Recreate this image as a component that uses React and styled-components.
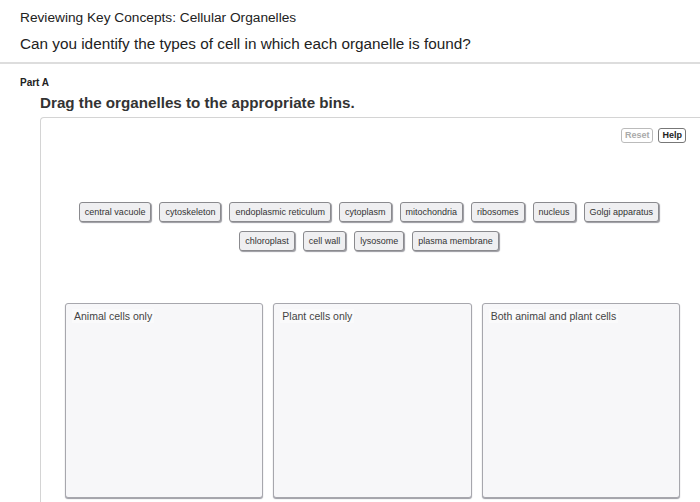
import React from "react";
import styled, { createGlobalStyle } from "styled-components";

const GlobalStyle = createGlobalStyle`
  body {
    margin: 0;
    background: #fff;
    font-family: "Liberation Sans", Arial, sans-serif;
    color: #222;
  }
`;

const Page = styled.div`
  width: 700px;
  height: 502px;
  overflow: hidden;
`;

const Header = styled.div`
  padding: 10px 20px 0;
`;

const Title = styled.div`
  font-size: 13.7px;
  line-height: 16px;
  color: #222;
`;

const Question = styled.div`
  margin-top: 9px;
  font-size: 15.3px;
  line-height: 18px;
  color: #222;
`;

const Divider = styled.hr`
  margin: 9px 0 0;
  border: none;
  border-top: 2px solid #ddd;
`;

const PartLabel = styled.div`
  padding: 13px 20px 0;
  font-size: 10px;
  font-weight: bold;
  line-height: 12px;
`;

const Instruction = styled.div`
  padding: 5px 40px 0;
  font-size: 15.2px;
  font-weight: bold;
  line-height: 18px;
  color: #333;
`;

const Panel = styled.div`
  margin: 5px 0 0 40px;
  height: 400px;
  border: 1px solid #d4d4d4;
  border-right: none;
  border-bottom: none;
  border-top-left-radius: 4px;
  display: flex;
  flex-direction: column;
`;

const Toolbar = styled.div`
  display: flex;
  justify-content: flex-end;
  gap: 5px;
  padding: 10px 14px 0 0;
`;

const ToolButton = styled.button`
  font-family: inherit;
  font-size: 9px;
  font-weight: bold;
  line-height: 13px;
  padding: 0 3px;
  background: #fff;
  border: 1px solid ${p => (p.$disabled ? "#bbb" : "#777")};
  color: ${p => (p.$disabled ? "#aaa" : "#222")};
  border-radius: 3px;
  cursor: pointer;
`;

const ChipArea = styled.div`
  display: flex;
  flex-direction: column;
  align-items: center;
  gap: 9px;
  margin-top: 59px;
  padding-right: 3px;
`;

const ChipRow = styled.div`
  display: flex;
  gap: 8px;
`;

const Chip = styled.div`
  height: 18px;
  line-height: 18px;
  padding: 0 5px;
  font-size: 9px;
  color: #333;
  background: #efeff1;
  border: 1px solid #8a8a8e;
  border-radius: 3px;
  box-shadow: 1px 1px 1px #9a9aa0;
  white-space: nowrap;
  cursor: grab;
`;

const Bins = styled.div`
  display: flex;
  gap: 10px;
  margin-top: 52px;
  padding: 0 20px 0 24px;
`;

const Bin = styled.div`
  flex: 1;
  height: 193px;
  background: #f7f7f9;
  border: 1px solid #a7a7ad;
  border-radius: 3px;
  box-shadow: 0 1px 1px #9c9ca4;
`;

const BinLabel = styled.div`
  display: inline-block;
  margin: 5px 0 0 6px;
  padding: 1px 2px;
  font-size: 10.5px;
  color: #444;
  background: #fafafb;
`;

const rows = [
  [
    "central vacuole",
    "cytoskeleton",
    "endoplasmic reticulum",
    "cytoplasm",
    "mitochondria",
    "ribosomes",
    "nucleus",
    "Golgi apparatus",
  ],
  ["chloroplast", "cell wall", "lysosome", "plasma membrane"],
];

const bins = ["Animal cells only", "Plant cells only", "Both animal and plant cells"];

export default function App() {
  return (
    <Page>
      <GlobalStyle />
      <Header>
        <Title>Reviewing Key Concepts: Cellular Organelles</Title>
        <Question>Can you identify the types of cell in which each organelle is found?</Question>
      </Header>
      <Divider />
      <PartLabel>Part A</PartLabel>
      <Instruction>Drag the organelles to the appropriate bins.</Instruction>
      <Panel>
        <Toolbar>
          <ToolButton $disabled>Reset</ToolButton>
          <ToolButton>Help</ToolButton>
        </Toolbar>
        <ChipArea>
          {rows.map((row, i) => (
            <ChipRow key={i}>
              {row.map(name => (
                <Chip key={name}>{name}</Chip>
              ))}
            </ChipRow>
          ))}
        </ChipArea>
        <Bins>
          {bins.map(name => (
            <Bin key={name}>
              <BinLabel>{name}</BinLabel>
            </Bin>
          ))}
        </Bins>
      </Panel>
    </Page>
  );
}
